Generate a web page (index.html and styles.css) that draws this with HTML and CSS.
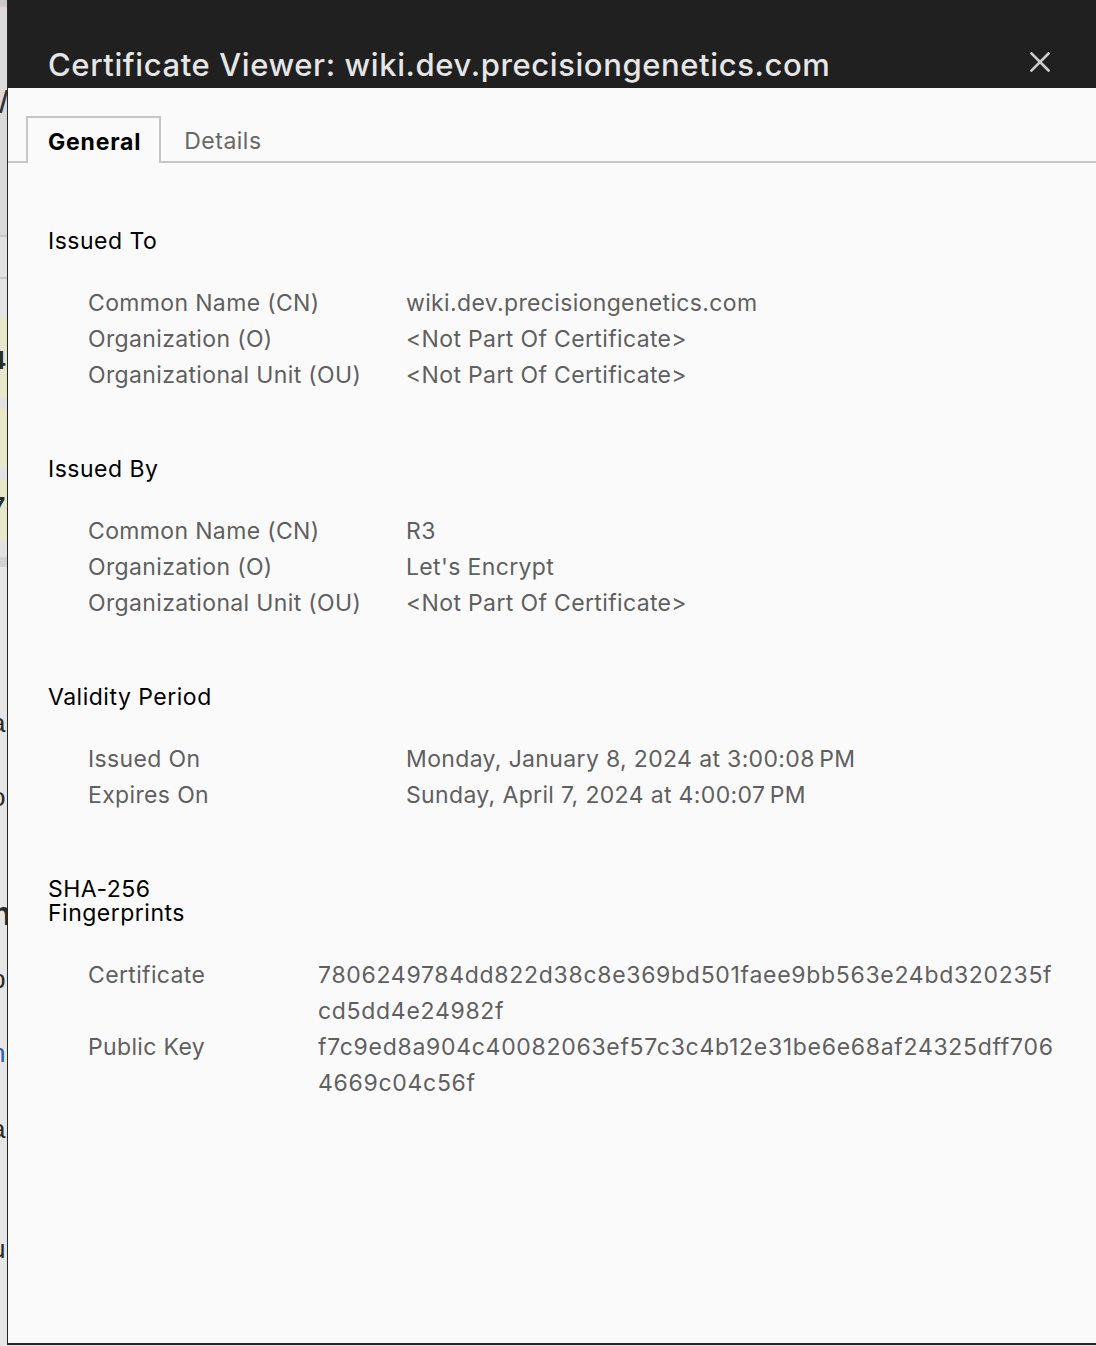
FILE: index.html
```html
<!DOCTYPE html>
<html lang="en">
<head>
<meta charset="utf-8">
<title>Certificate Viewer</title>
<link rel="stylesheet" href="styles.css">
</head>
<body>
<div class="screen">
  <div class="backdrop" aria-hidden="true">
    <div class="bd b-top"></div>
    <div class="bd b-pink"></div>
    <div class="bd b-g1"><span class="frag big">W</span></div>
    <div class="bd b-line"></div>
    <div class="bd b-g2"></div>
    <div class="bd b-line"></div>
    <div class="bd b-g3"></div>
    <div class="bd b-yel y1"><span class="frag">4</span></div>
    <div class="bd b-gap g1"></div>
    <div class="bd b-yel y2"><span class="frag">-</span></div>
    <div class="bd b-gap g2"></div>
    <div class="bd b-yel y3"><span class="frag">7</span></div>
    <div class="bd b-gap g3"></div>
    <div class="bd b-dark"></div>
    <div class="bd b-rest">
      <span class="frag f-r">r</span>
      <span class="frag f-a">a</span>
      <span class="frag f-o">o</span>
      <span class="frag f-n big">n</span>
      <span class="frag f-p">p</span>
      <span class="frag f-link">n</span>
      <span class="frag f-a2">a</span>
      <span class="frag f-u">u</span>
    </div>
  </div>

  <div class="dialog">
    <header class="titlebar">
      <h1 class="title">Certificate Viewer: wiki.dev.precisiongenetics.com</h1>
      <button class="close" aria-label="Close">
        <svg width="20" height="20" viewBox="0 0 20 20"><path d="M1.5 1.5 L18.5 18.5 M18.5 1.5 L1.5 18.5" stroke="#cdcdcd" stroke-width="2.6" stroke-linecap="square" fill="none"/></svg>
      </button>
    </header>

    <nav class="tabs">
      <div class="tab active">General</div>
      <div class="tab">Details</div>
    </nav>

    <main class="content">
      <section class="section">
        <h2 class="heading">Issued To</h2>
        <div class="rows wide">
          <div class="label">Common Name (CN)</div><div class="value">wiki.dev.precisiongenetics.com</div>
          <div class="label">Organization (O)</div><div class="value">&lt;Not Part Of Certificate&gt;</div>
          <div class="label">Organizational Unit (OU)</div><div class="value">&lt;Not Part Of Certificate&gt;</div>
        </div>
      </section>

      <section class="section">
        <h2 class="heading">Issued By</h2>
        <div class="rows wide">
          <div class="label">Common Name (CN)</div><div class="value">R3</div>
          <div class="label">Organization (O)</div><div class="value">Let's Encrypt</div>
          <div class="label">Organizational Unit (OU)</div><div class="value">&lt;Not Part Of Certificate&gt;</div>
        </div>
      </section>

      <section class="section">
        <h2 class="heading">Validity Period</h2>
        <div class="rows wide">
          <div class="label">Issued On</div><div class="value">Monday, January 8, 2024 at 3:00:08&#8239;PM</div>
          <div class="label">Expires On</div><div class="value">Sunday, April 7, 2024 at 4:00:07&#8239;PM</div>
        </div>
      </section>

      <section class="section">
        <h2 class="heading narrow">SHA-256 Fingerprints</h2>
        <div class="rows fp">
          <div class="label">Certificate</div><div class="value hash">7806249784dd822d38c8e369bd501faee9bb563e24bd320235f<wbr>cd5dd4e24982f</div>
          <div class="label">Public Key</div><div class="value hash">f7c9ed8a904c40082063ef57c3c4b12e31be6e68af24325dff706<wbr>4669c04c56f</div>
        </div>
      </section>
    </main>
  </div>
</div>
</body>
</html>
```

FILE: styles.css
```css
* { box-sizing: border-box; }
html, body { margin: 0; padding: 0; }
body {
  width: 1096px;
  height: 1346px;
  overflow: hidden;
  background: #e4e4e4;
  font-family: Inter, "Noto Sans", "Liberation Sans", sans-serif;
}
.screen {
  display: flex;
  height: 1346px;
}

/* background page peeking out on the left */
.backdrop {
  width: 7px;
  flex: none;
  display: flex;
  flex-direction: column;
  overflow: hidden;
  background: #e6e6e6;
}
.bd { flex: none; overflow: hidden; }
.b-top { height: 5px; background: #c9c9c9; }
.b-pink { height: 2px; background: #dcc4cc; }
.b-g1 { height: 228px; background: #dadada; }
.b-line { height: 2px; background: #c8c8c8; }
.b-g2 { height: 40px; background: #e2e2e2; }
.b-g3 { height: 39px; background: #e4e4e4; }
.b-yel { background: #e7e7c9; }
.y1 { height: 80px; }
.y2 { height: 59px; }
.y3 { height: 60px; }
.b-gap { background: #e2e2e2; }
.g1 { height: 11px; }
.g2 { height: 12px; }
.g3 { height: 17px; }
.b-dark { height: 10px; background: #d2d2d2; }
.b-rest { flex: 1; background: #e6e6e6; display: flex; flex-direction: column; }

.frag {
  display: block;
  font-family: "Liberation Sans", sans-serif;
  font-size: 26px;
  line-height: 28px;
  color: #2a2a2a;
  text-indent: -9px;
  white-space: nowrap;
}
.frag.big { font-weight: 700; font-size: 34px; }
.b-g1 .frag { margin-top: 80px; color: #333; font-weight: 400; }
.y1 .frag { margin-top: 28px; font-weight: 700; }
.y2 .frag { margin-top: 14px; font-weight: 700; }
.y3 .frag { margin-top: 12px; font-weight: 700; }
.f-r { margin-top: 62px; }
.f-a { margin-top: 52px; }
.f-o { margin-top: 46px; }
.f-n { margin-top: 88px; }
.f-p { margin-top: 38px; }
.f-link { margin-top: 46px; color: #2a5db0; }
.f-a2 { margin-top: 48px; }
.f-u { margin-top: 92px; }

/* dialog */
.dialog {
  flex: 1;
  height: 1345px;
  background: #fafafa;
  border-left: 1px solid #262626;
  border-bottom: 2px solid #262626;
  display: flex;
  flex-direction: column;
}
.titlebar {
  height: 88px;
  flex: none;
  background: #202020;
  display: flex;
  align-items: flex-end;
  justify-content: space-between;
  padding: 0 46px 0 40px;
}
.title {
  margin: 0 0 3px 0;
  font-size: 31px;
  line-height: 40px;
  font-weight: 500;
  color: #e6e6e6;
  letter-spacing: 0.6px;
}
.close {
  width: 20px;
  height: 20px;
  padding: 0;
  margin: 0 0 16px 0;
  border: 0;
  background: none;
  display: block;
}
.close svg { display: block; }

.tabs {
  margin-top: 30px;
  padding-left: 18px;
  display: flex;
  align-items: flex-end;
  border-bottom: 2px solid #c6c6c6;
  height: 45px;
}
.tab {
  height: 45px;
  padding: 0 20px 0 23px;
  font-size: 23px;
  letter-spacing: 0.5px;
  line-height: 50px;
  color: #666666;
}
.tab.active {
  color: #000;
  font-weight: 700;
  letter-spacing: 0.8px;
  border: 2px solid #c6c6c6;
  border-bottom: 0;
  background: #fafafa;
  margin-bottom: -2px;
  height: 47px;
  line-height: 48px;
  padding: 0 18px 0 20px;
}

.content {
  padding: 66px 40px 0 40px;
  display: flex;
  flex-direction: column;
  gap: 64px;
}
.section { display: flex; flex-direction: column; gap: 32px; }
.heading {
  margin: 0;
  font-size: 23px;
  line-height: 24px;
  font-weight: 400;
  letter-spacing: 0.5px;
  color: #000;
}
.heading.narrow { width: 190px; }

.rows {
  display: grid;
  padding-left: 40px;
  font-size: 23px;
  letter-spacing: 0.35px;
  line-height: 36px;
  color: #5f5f5f;
}
.rows.wide { grid-template-columns: 318px 1fr; }
.rows.fp { grid-template-columns: 230px 1fr; }
.value.hash { letter-spacing: 0.7px; }
```
